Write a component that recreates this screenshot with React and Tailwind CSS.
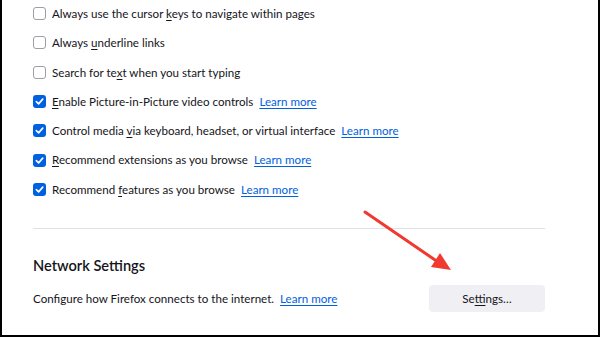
import React from 'react';

const Check = ({ checked }) =>
  checked ? (
    <span className="flex h-[13px] w-[13px] shrink-0 items-center justify-center rounded-[3px] bg-[#0061e0]">
      <svg width="9" height="9" viewBox="0 0 10 10" fill="none">
        <path d="M1.5 5.2 L4 7.6 L8.6 2.4" stroke="white" strokeWidth="1.8" strokeLinecap="round" strokeLinejoin="round" />
      </svg>
    </span>
  ) : (
    <span className="h-[13px] w-[13px] shrink-0 rounded-[3px] border border-[#9e9ea6] bg-white" />
  );

const LearnMore = () => (
  <a className="ml-[6px] text-[#0061e0] underline underline-offset-2">Learn more</a>
);

const Row = ({ checked, children, link }) => (
  <div className="flex h-[29.3px] items-center">
    <Check checked={checked} />
    <span className="ml-[6px] text-[#15141a]">{children}</span>
    {link && <LearnMore />}
  </div>
);

const U = ({ children }) => <span className="underline underline-offset-2">{children}</span>;

export default function App() {
  return (
    <div
      className="relative h-[337px] w-[600px] overflow-hidden border-x-2 border-b-2 border-black bg-white text-[11.6px]"
      style={{ fontFamily: 'Lato, "Noto Sans", sans-serif' }}
    >
      <div className="pl-[31px] pr-[53px]">
        <div className="-mt-px flex flex-col">
          <Row>Always use the cursor <U>k</U>eys to navigate within pages</Row>
          <Row>Always <U>u</U>nderline links</Row>
          <Row>Search for te<U>x</U>t when you start typing</Row>
          <Row checked link><U>E</U>nable Picture-in-Picture video controls</Row>
          <Row checked link>Control media <U>v</U>ia keyboard, headset, or virtual interface</Row>
          <Row checked link><U>R</U>ecommend extensions as you browse</Row>
          <Row checked link>Recommend <U>f</U>eatures as you browse</Row>
        </div>

        <div className="mt-[24px] h-px bg-[#e0e0e6]" />

        <h2 className="mt-[25px] text-[14.6px] font-semibold leading-[24px] text-[#15141a]">Network Settings</h2>

        <div className="mt-[7px] flex items-center justify-between">
          <p className="text-[#15141a]">
            Configure how Firefox connects to the internet.
            <LearnMore />
          </p>
          <button className="h-[27px] w-[116px] rounded-[4px] bg-[#f0f0f4] text-[11.6px] text-[#15141a]">
            Se<U>t</U>tings…
          </button>
        </div>
      </div>

      <svg className="pointer-events-none absolute left-0 top-0" width="600" height="337">
        <line x1="363" y1="212" x2="436" y2="262" stroke="#f0392f" strokeWidth="3" strokeLinecap="round" />
        <polygon points="449,270 429,267 438,253" fill="#f0392f" />
      </svg>
    </div>
  );
}
